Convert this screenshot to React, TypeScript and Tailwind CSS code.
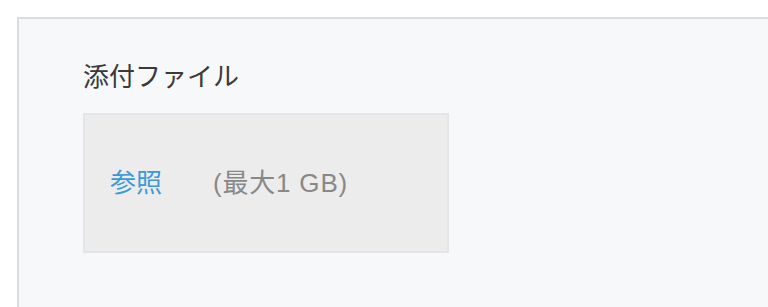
export default function App() {
  return (
    <div
      className="h-[307px] w-[768px] overflow-hidden bg-white pl-[17px] pt-[17px]"
      style={{ fontFamily: '"Liberation Sans", "Noto Sans CJK JP", sans-serif' }}
    >
      <div className="h-[320px] w-[780px] border-l-2 border-t-2 border-[#dcdcdc] bg-[#f7f8fa] pl-[64px] pt-[38px]">
        <div className="text-[26px] leading-[40px] text-[#3a3a3a]">添付ファイル</div>
        <div className="mt-[16px] flex h-[140px] w-[366px] items-center border-2 border-[#e3e5e8] bg-[#ececec] pl-[25px]">
          <span className="text-[26px] leading-none text-[#3b99d9]">参照</span>
          <span className="ml-[51px] text-[26px] leading-none tracking-[0.8px] text-[#888888]">(最大1 GB)</span>
        </div>
      </div>
    </div>
  );
}
